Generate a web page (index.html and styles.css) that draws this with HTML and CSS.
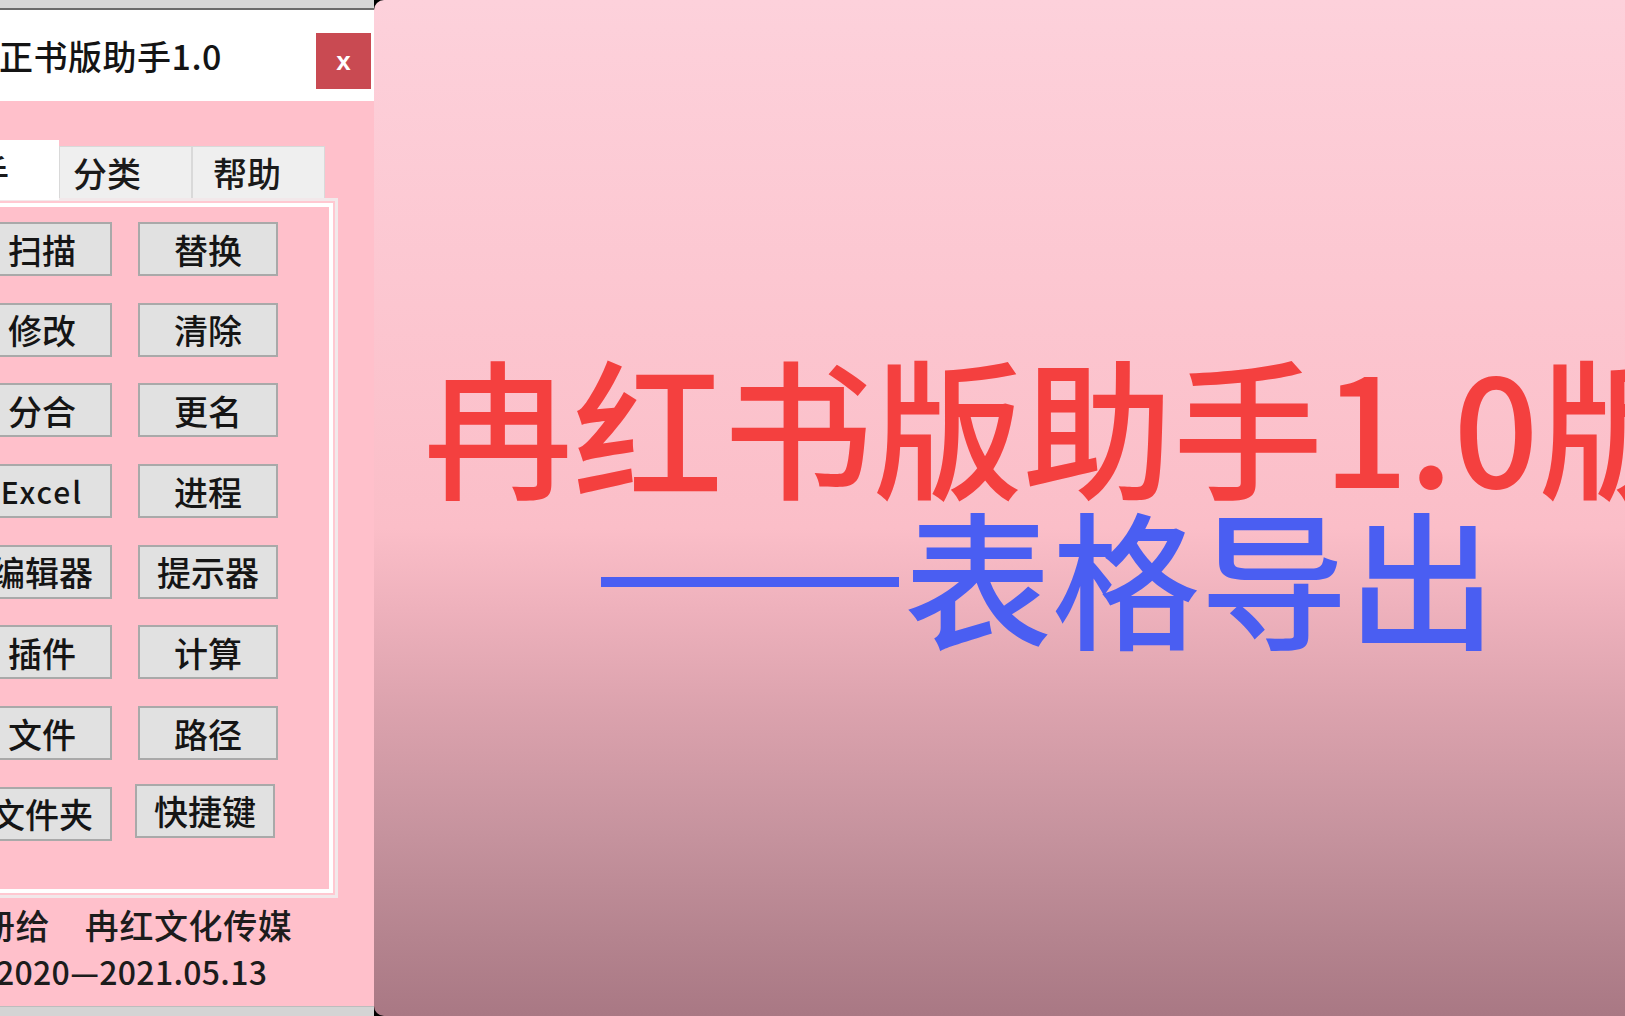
FILE: index.html
```html
<!DOCTYPE html>
<html lang="zh-CN">
<head>
<meta charset="utf-8">
<title>冉红书版助手1.0版——表格导出</title>
<link rel="stylesheet" href="styles.css">
</head>
<body>
  <div class="window">
    <div class="topbar"></div>
    <div class="titlebar">
      <div class="title">正书版助手1.0</div>
      <div class="close">x</div>
    </div>
    <div class="main">
      <div class="tabs">
        <div class="tab tab-active">助手</div>
        <div class="tab">分类</div>
        <div class="tab tab-help">帮助</div>
      </div>
      <div class="panel">
        <div class="btn-grid">
          <div class="btn">扫描</div>
          <div class="btn">替换</div>
          <div class="btn">修改</div>
          <div class="btn">清除</div>
          <div class="btn">分合</div>
          <div class="btn">更名</div>
          <div class="btn btn-latin">Excel</div>
          <div class="btn">进程</div>
          <div class="btn">编辑器</div>
          <div class="btn">提示器</div>
          <div class="btn">插件</div>
          <div class="btn">计算</div>
          <div class="btn">文件</div>
          <div class="btn">路径</div>
          <div class="btn">文件夹</div>
          <div class="btn btn-shift">快捷键</div>
        </div>
      </div>
      <div class="footer">
        <div class="footer-line">册给　冉红文化传媒</div>
        <div class="footer-line footer-date">2020—2021.05.13</div>
      </div>
    </div>
    <div class="bottombar"></div>
  </div>
  <div class="stage">
    <div class="headline">冉红书版助手1.0版</div>
    <div class="subline"><span class="dash">——</span><span class="sub-text">表格导出</span></div>
  </div>
</body>
</html>
```
FILE: styles.css
```css
html, body {
  margin: 0;
  padding: 0;
}

body {
  width: 1625px;
  height: 1016px;
  overflow: hidden;
  display: flex;
  background: #000;
  font-family: "Noto Sans CJK SC", "Noto Sans", sans-serif;
}

/* ---------- left application window ---------- */
.window {
  flex: none;
  width: 464px;
  margin-left: -90px;
  height: 1016px;
  display: flex;
  flex-direction: column;
  background: pink;
}

.topbar {
  height: 8px;
  background: #d6d6d6;
  border-bottom: 2px solid #6a6a6a;
}

.titlebar {
  height: 91px;
  background: #fff;
  display: flex;
  align-items: center;
  justify-content: space-between;
  padding-left: 89px;
  padding-right: 3px;
}

.title {
  font-size: 34px;
  font-weight: 500;
  color: #141414;
  letter-spacing: 0.5px;
}

.close {
  width: 55px;
  height: 56px;
  margin-top: 11px;
  background: #c94a52;
  color: #fff;
  font-family: "Liberation Sans", sans-serif;
  font-weight: 700;
  font-size: 26px;
  display: flex;
  align-items: center;
  justify-content: center;
}

.main {
  flex: 1;
  background: pink;
  display: flex;
  flex-direction: column;
}

.tabs {
  margin-top: 39px;
  height: 58px;
  display: flex;
  align-items: flex-end;
}

.tab {
  box-sizing: border-box;
  width: 133px;
  height: 52px;
  background: #efefef;
  border: 1px solid #d9d9d9;
  border-bottom: none;
  padding-left: 13px;
  display: flex;
  align-items: center;
  font-size: 34px;
  font-weight: 500;
  color: #1a1a1a;
}

.tab-help {
  padding-left: 20px;
}

.tab-active {
  width: 149px;
  height: 60px;
  margin-bottom: -2px;
  background: #fff;
  border-color: #fff;
  padding-left: 30px;
  position: relative;
  z-index: 1;
}

.panel {
  box-sizing: border-box;
  width: 420px;
  height: 700px;
  margin-left: 8px;
  border: 3px solid #f2e8ea;
  box-shadow: inset 0 0 0 2px #ffc8d1, inset 0 0 0 6px #fff;
  background: pink;
  padding: 21px 0 0 51px;
}

.btn-grid {
  display: grid;
  grid-template-columns: 140px 140px;
  grid-auto-rows: 54px;
  column-gap: 26px;
  row-gap: 26.7px;
}

.btn {
  box-sizing: border-box;
  background: #e1e1e1;
  border: 2px solid #a9a9a9;
  display: flex;
  align-items: center;
  justify-content: center;
  font-size: 34px;
  font-weight: 500;
  color: #151515;
  white-space: nowrap;
}

.btn-latin {
  letter-spacing: 2px;
  font-size: 30px;
}

.btn-shift {
  margin-left: -3px;
  margin-top: -3px;
  margin-bottom: 3px;
  margin-right: 3px;
}

.footer {
  padding-top: 4px;
  padding-left: 71px;
  color: #1c1c1c;
  font-weight: 500;
}

.footer-line {
  font-size: 34px;
  line-height: 46px;
  white-space: nowrap;
  letter-spacing: 0.6px;
}

.footer-date {
  font-size: 32px;
  margin-left: 15px;
  letter-spacing: 0.3px;
}

.bottombar {
  height: 9px;
  background: #d4d4d4;
  border-top: 1px solid #bdbdbd;
}

/* ---------- right slide area ---------- */
.stage {
  flex: 1;
  border-radius: 10px 0 0 10px;
  background: linear-gradient(to bottom,
    #fdd1db 0%,
    #fcc6d0 30%,
    #fbbec8 52%,
    #eeb1bc 60%,
    #dba2ad 70%,
    #c6939e 82%,
    #b5848f 92%,
    #a97884 100%);
  padding-top: 348px;
  overflow: hidden;
}

.headline {
  margin-left: 49px;
  font-size: 150px;
  line-height: 150px;
  font-weight: 500;
  color: #f4403f;
  white-space: nowrap;
}

.subline {
  margin-left: 227px;
  margin-top: 2px;
  font-size: 148px;
  line-height: 148px;
  font-weight: 500;
  color: #4a5ef2;
  white-space: nowrap;
}

.dash {
  display: inline-block;
  font-family: "Liberation Sans", sans-serif;
  font-weight: 400;
  font-size: 149px;
  line-height: 40px;
  vertical-align: 18px;
  margin-right: 5px;
}

.sub-text {
  font-weight: 500;
}
```
